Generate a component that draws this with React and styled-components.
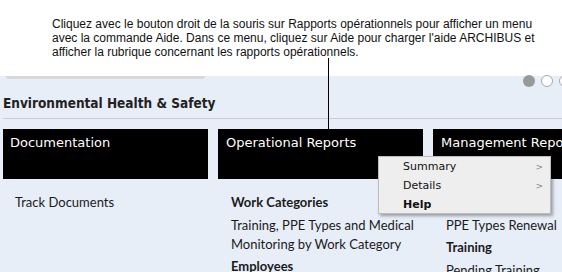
import React from "react";
import styled, { createGlobalStyle } from "styled-components";

const GlobalStyle = createGlobalStyle`
  html, body { margin: 0; padding: 0; background: #e8eef8; }
  * { box-sizing: border-box; }
`;

const Page = styled.div`
  position: relative;
  width: 562px;
  height: 272px;
  overflow: hidden;
  background: #e8eef8;
`;

const Header = styled.div`
  height: 76px;
  background: #ffffff;
  padding: 17px 0 0 52px;
`;

const Callout = styled.p`
  margin: 0;
  font-family: "Liberation Sans", Arial, sans-serif;
  font-size: 12px;
  line-height: 14px;
  color: #111;
`;

const CalloutLine = styled.span`
  display: block;
  white-space: nowrap;
`;

const Leader = styled.div`
  position: absolute;
  left: 328px;
  top: 58px;
  width: 1px;
  height: 71px;
  background: #000;
`;

const Main = styled.div`
  padding-left: 3px;
`;

const TopStrip = styled.div`
  display: flex;
  align-items: flex-start;
  height: 4px;
`;

const ShadowTab = styled.div`
  flex-shrink: 0;
  margin-left: 3px;
  width: 199px;
  height: 3px;
  background: #d8d8d8;
  border-radius: 0 0 8px 8px;
`;

const Pager = styled.div`
  flex-shrink: 0;
  display: flex;
  gap: 6px;
  margin-left: 318px;
  margin-top: -1px;
`;

const Dot = styled.span`
  width: 12px;
  height: 12px;
  border-radius: 50%;
  background: ${(p) => (p.$active ? "#999999" : "#ffffff")};
  border: ${(p) => (p.$active ? "none" : "1.5px solid #a8a8a8")};
`;

const SectionTitle = styled.h2`
  margin: 14px 0 0 0;
  padding-bottom: 6px;
  border-bottom: 1px solid #c9ccd3;
  font-family: "DejaVu Sans Condensed", "DejaVu Sans", sans-serif;
  font-weight: bold;
  font-size: 13.5px;
  line-height: 18px;
  color: #222;
`;

const Columns = styled.div`
  display: grid;
  grid-template-columns: 205px 205px 205px;
  column-gap: 10px;
  margin-top: 10px;
`;

const Column = styled.div``;

const CardHeader = styled.div`
  height: 50px;
  background: #000;
  color: #fff;
  padding: 6px 0 0 ${(p) => p.$pad || 8}px;
  font-family: "DejaVu Sans", Verdana, sans-serif;
  font-size: 13px;
  line-height: 16px;
  white-space: nowrap;
  overflow: hidden;
`;

const List = styled.div`
  padding: 14px 0 0 ${(p) => p.$pad || 13}px;
  font-family: Lato, "Open Sans", sans-serif;
  font-size: 13px;
  color: #1a1a1a;
`;

const Group = styled.div`
  & + & { margin-top: 3px; }
`;

const GroupTitle = styled.div`
  font-weight: bold;
  line-height: 19px;
  margin-bottom: 4px;
`;

const Item = styled.div`
  line-height: 19px;
  white-space: nowrap;
`;

const Menu = styled.div`
  position: absolute;
  left: 378px;
  top: 156px;
  width: 173px;
  height: 58px;
  background: #eeeeee;
  border: 1px solid #bdbdbd;
  box-shadow: 2px 2px 3px rgba(0, 0, 0, 0.35);
  font-family: "DejaVu Sans", Verdana, sans-serif;
  font-size: 11px;
  color: #111;
`;

const MenuItem = styled.div`
  display: flex;
  align-items: center;
  justify-content: space-between;
  height: 19px;
  padding: 0 7px 0 24px;
  font-weight: ${(p) => (p.$bold ? "bold" : "normal")};
`;

const Arrow = styled.span`
  font-size: 9px;
  color: #888;
`;

export default function App() {
  return (
    <>
      <GlobalStyle />
      <Page>
        <Header>
          <Callout>
            <CalloutLine>Cliquez avec le bouton droit de la souris sur Rapports opérationnels pour afficher un menu</CalloutLine>
            <CalloutLine>avec la commande Aide. Dans ce menu, cliquez sur Aide pour charger l'aide ARCHIBUS et</CalloutLine>
            <CalloutLine>afficher la rubrique concernant les rapports opérationnels.</CalloutLine>
          </Callout>
        </Header>
        <Main>
          <TopStrip>
            <ShadowTab />
            <Pager>
              <Dot $active />
              <Dot />
              <Dot />
            </Pager>
          </TopStrip>
          <SectionTitle>Environmental Health &amp; Safety</SectionTitle>
          <Columns>
            <Column>
              <CardHeader $pad={7}>Documentation</CardHeader>
              <List $pad={12}>
                <Group>
                  <Item>Track Documents</Item>
                </Group>
              </List>
            </Column>
            <Column>
              <CardHeader>Operational Reports</CardHeader>
              <List>
                <Group>
                  <GroupTitle>Work Categories</GroupTitle>
                  <Item>Training, PPE Types and Medical</Item>
                  <Item>Monitoring by Work Category</Item>
                </Group>
                <Group>
                  <GroupTitle>Employees</GroupTitle>
                </Group>
              </List>
            </Column>
            <Column>
              <CardHeader>Management Reports</CardHeader>
              <List>
                <Group>
                  <GroupTitle>PPE</GroupTitle>
                  <Item>PPE Types Renewal</Item>
                </Group>
                <Group>
                  <GroupTitle>Training</GroupTitle>
                  <Item>Pending Training</Item>
                </Group>
              </List>
            </Column>
          </Columns>
        </Main>
        <Leader />
        <Menu>
          <MenuItem>
            <span>Summary</span>
            <Arrow>&gt;</Arrow>
          </MenuItem>
          <MenuItem>
            <span>Details</span>
            <Arrow>&gt;</Arrow>
          </MenuItem>
          <MenuItem $bold>
            <span>Help</span>
          </MenuItem>
        </Menu>
      </Page>
    </>
  );
}
